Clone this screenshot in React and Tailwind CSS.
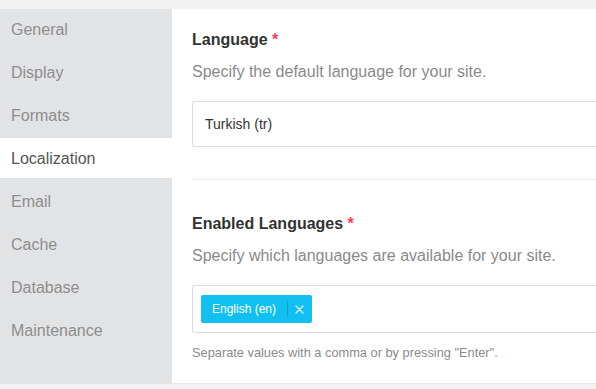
import React from "react";

const items = ["General", "Display", "Formats", "Localization", "Email", "Cache", "Database", "Maintenance"];

export default function App() {
  return (
    <div className="w-[596px] h-[389px] overflow-hidden bg-[#f1f1f1] flex flex-col" style={{ fontFamily: '"Liberation Sans", Arial, sans-serif' }}>
      <div className="h-[9px] shrink-0" />
      <div className="flex h-[374px] shrink-0">
        <nav className="w-[172px] shrink-0 bg-[#e2e3e5] flex flex-col gap-[3px]">
          {items.map((it) => (
            <div
              key={it}
              className={
                "h-[40px] flex items-center pl-[11px] pt-[2px] text-[16px] " +
                (it === "Localization" ? "bg-white text-[#555]" : "text-[#8e8e8e]")
              }
            >
              {it}
            </div>
          ))}
        </nav>
        <main className="flex-1 bg-white overflow-hidden pl-[20px] pt-[19px]">
          <div className="w-[440px]">
            <div className="text-[16px] leading-[24px] font-bold text-[#333]">
              Language <span className="text-[#ff3860]">*</span>
            </div>
            <div className="mt-[8px] text-[16px] leading-[24px] text-[#8a8a8a]">
              Specify the default language for your site.
            </div>
            <div className="mt-[17px] h-[46px] border border-[#dcdcdc] rounded-[2px] flex items-center pl-[12px] text-[14px] text-[#333]">
              Turkish (tr)
            </div>
            <div className="mt-[32px] h-px bg-[#ebebeb]" />
            <div className="mt-[32px] text-[16px] leading-[24px] font-bold text-[#333]">
              Enabled Languages <span className="text-[#ff3860]">*</span>
            </div>
            <div className="mt-[8px] text-[16px] leading-[24px] text-[#8a8a8a]">
              Specify which languages are available for your site.
            </div>
            <div className="mt-[17px] h-[48px] border border-[#dcdcdc] rounded-[2px] flex items-center pl-[8px]">
              <div className="h-[28px] w-[111px] bg-[#12bff1] rounded-[2px] flex items-center text-white text-[12px]">
                <span className="pl-[11px] pr-[11px]">English (en)</span>
                <span className="h-[16px] w-px bg-[#0ea6d2]" />
                <span className="flex-1 flex items-center justify-center pr-[1px]">
                  <svg width="9" height="9" viewBox="0 0 9 9">
                    <path d="M1 1L8 8M8 1L1 8" stroke="#e3f7fe" strokeWidth="1.2" strokeLinecap="round" />
                  </svg>
                </span>
              </div>
            </div>
            <div className="mt-[12px] text-[12.8px] leading-[16px] text-[#8a8a8a]">
              Separate values with a comma or by pressing "Enter".
            </div>
          </div>
        </main>
      </div>
      <div className="flex-1 border-t border-[#e6e6e6]" />
    </div>
  );
}
